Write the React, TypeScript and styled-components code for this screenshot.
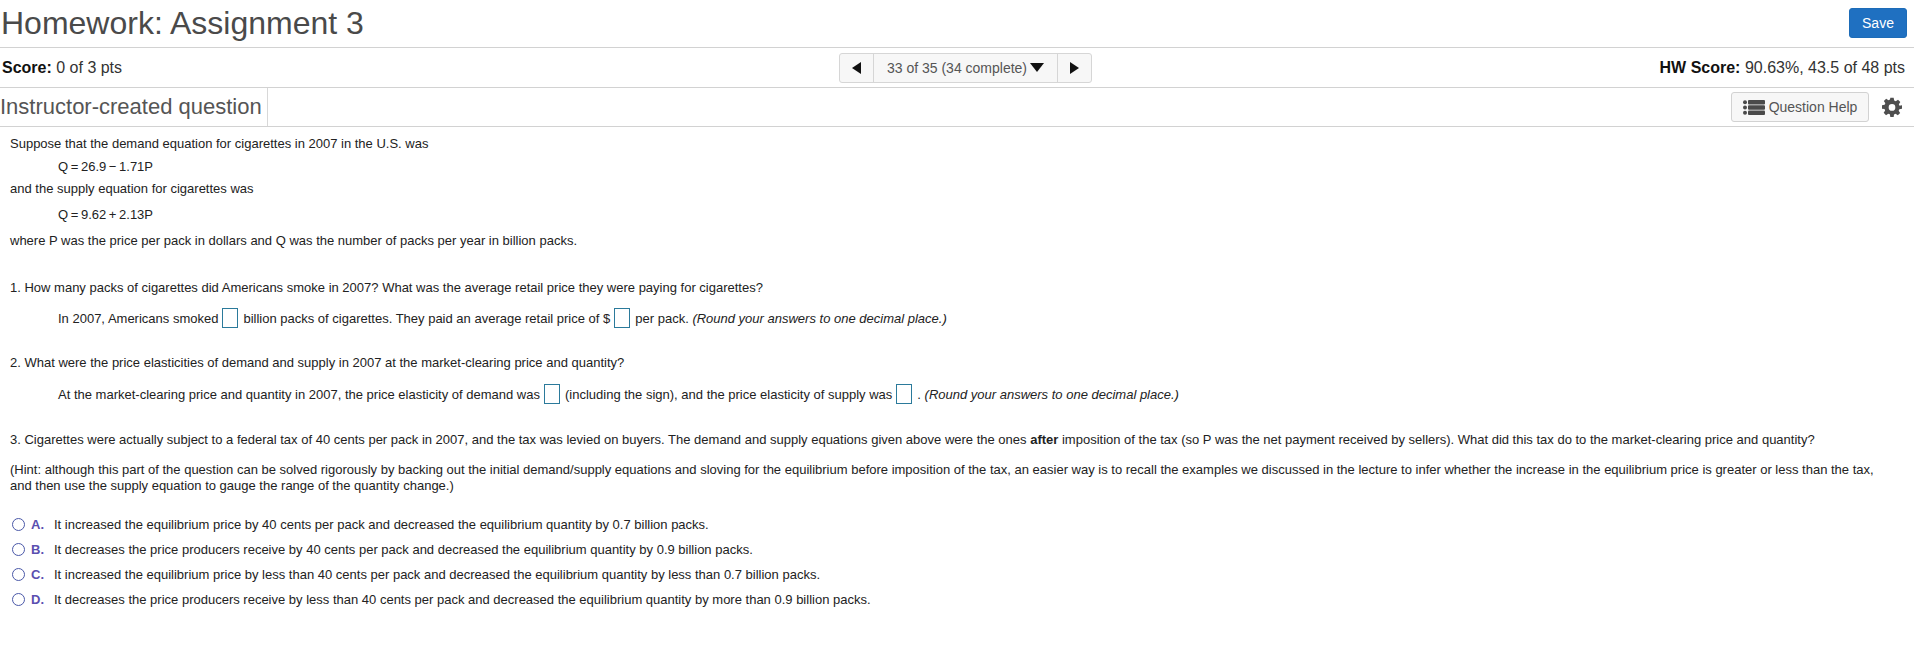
import React from "react";
import styled, {createGlobalStyle} from "styled-components";

const GlobalStyle = createGlobalStyle`
  html, body {
    margin: 0;
    padding: 0;
    background: #fff;
    font-family: "Liberation Sans", Arial, sans-serif;
  }
`

const Page = styled.div`
  width: 1914px;
  height: 647px;
  overflow: hidden;
`
const TitleBar = styled.div`
  height: 48px;
  box-sizing: border-box;
  display: flex;
  align-items: center;
  justify-content: space-between;
  padding: 0 7px 1px 1px;
  border-bottom: 1px solid #d2d2d2;
`
const Title = styled.h1`
  margin: 0;
  font-size: 32px;
  font-weight: 400;
  color: #4a4a4a;
`
const SaveButton = styled.button`
  width: 58px;
  height: 30px;
  padding: 0;
  border: 1px solid #1d6cb8;
  border-radius: 3px;
  background: #1f70c1;
  color: #fff;
  font: 14px "Liberation Sans", Arial, sans-serif;
`
const ScoreBar = styled.div`
  height: 39px;
  display: grid;
  grid-template-columns: 837px auto 1fr;
  align-items: center;
  padding: 0 9px 0 2px;
  border-bottom: 1px solid #d2d2d2;
  font-size: 16px;
  color: #333;
`
const ScoreText = styled.div<{$right?: boolean}>`
  text-align: ${p => (p.$right ? "right" : "left")};

  b {
    color: #111;
  }
`
const Pager = styled.div`
  display: flex;
  height: 30px;
  border: 1px solid #d6d6d6;
  border-radius: 3px;
  background: #f7f7f7;
  box-sizing: border-box;
`
const PagerArrow = styled.div`
  width: 33px;
  display: flex;
  align-items: center;
  justify-content: center;
`
const PagerLabel = styled.div`
  width: 183px;
  display: flex;
  align-items: center;
  justify-content: center;
  gap: 3px;
  border-left: 1px solid #d6d6d6;
  border-right: 1px solid #d6d6d6;
  font-size: 14px;
  color: #555;
`
const QuestionBar = styled.div`
  height: 38px;
  display: flex;
  align-items: stretch;
  justify-content: space-between;
  padding-right: 12px;
  border-bottom: 1px solid #d2d2d2;
`
const QuestionTitle = styled.div`
  display: flex;
  align-items: center;
  padding-right: 5px;
  border-right: 1px solid #d8d8d8;
  font-size: 22px;
  color: #555;
`
const QuestionTools = styled.div`
  display: flex;
  align-items: center;
  gap: 13px;
`
const HelpButton = styled.button`
  width: 138px;
  height: 30px;
  display: flex;
  align-items: center;
  justify-content: center;
  gap: 4px;
  padding: 0;
  border: 1px solid #d2d2d2;
  border-radius: 3px;
  background: #f7f7f7;
  color: #555;
  font: 14px "Liberation Sans", Arial, sans-serif;
`
const Body = styled.div`
  padding: 0 20px 0 10px;
  font-size: 13px;
  color: #222;
`
const Line = styled.div<{$top: number; $indent?: number}>`
  margin-top: ${p => p.$top}px;
  margin-left: ${p => p.$indent || 0}px;
  line-height: 15px;
  display: flex;
  align-items: center;
  white-space: pre;
`
const Equation = styled(Line)`
  word-spacing: -1px;
`
const Answer = styled.span`
  width: 16px;
  height: 20px;
  margin: 0 5px 0 4px;
  border: 1px solid #2b7a9b;
  box-sizing: border-box;
  display: inline-block;
`
const Hint = styled.div`
  margin-top: 15px;
  line-height: 16px;
`
const Choices = styled.div`
  margin-top: 23px;
  display: flex;
  flex-direction: column;
  gap: 10px;
`
const Choice = styled.div`
  display: flex;
  align-items: center;
  line-height: 15px;
  margin-left: 2px;
`
const Radio = styled.span`
  width: 13px;
  height: 13px;
  border: 1px solid #4a58a8;
  border-radius: 50%;
  box-sizing: border-box;
  margin-right: 6px;
  flex: none;
`
const ChoiceLetter = styled.b`
  width: 23px;
  color: #5a4fb0;
  font-size: 13px;
`

const choices = [
    ["A.", "It increased the equilibrium price by 40 cents per pack and decreased the equilibrium quantity by 0.7 billion packs."],
    ["B.", "It decreases the price producers receive by 40 cents per pack and decreased the equilibrium quantity by 0.9 billion packs."],
    ["C.", "It increased the equilibrium price by less than 40 cents per pack and decreased the equilibrium quantity by less than 0.7 billion packs."],
    ["D.", "It decreases the price producers receive by less than 40 cents per pack and decreased the equilibrium quantity by more than 0.9 billion packs."],
]

const Triangle: React.FC<{dir: "left" | "right" | "down"}> = ({dir}) => {
    const points = {left: "9,0 9,12 0,6", right: "0,0 0,12 9,6", down: "0,0 14,0 7,9"}[dir]
    const [w, h] = dir === "down" ? [14, 9] : [9, 12]
    return <svg width={w} height={h} viewBox={`0 0 ${w} ${h}`}><polygon points={points} fill="#111"/></svg>
}

const ListIcon = () => (
    <svg width="22" height="15" viewBox="0 0 22 15" fill="#4a4a4a">
        <circle cx="2" cy="2.2" r="2"/>
        <circle cx="2" cy="7.5" r="2"/>
        <circle cx="2" cy="12.8" r="2"/>
        <rect x="5" y="0" width="17" height="4.4" rx="1"/>
        <rect x="5" y="5.3" width="17" height="4.4" rx="1"/>
        <rect x="5" y="10.6" width="17" height="4.4" rx="1"/>
    </svg>
)

const GearIcon = () => (
    <svg width="20" height="20" viewBox="0 0 24 24" fill="#4f4f4f">
        <path fillRule="evenodd" d="M10 1h4l.6 3.2 1.9.8 2.7-1.8 2.8 2.8-1.8 2.7.8 1.9L24 10v4l-3.2.6-.8 1.9 1.8 2.7-2.8 2.8-2.7-1.8-1.9.8L14 24h-4l-.6-3.2-1.9-.8-2.7 1.8L2 19l1.8-2.7-.8-1.9L0 14v-4l3.2-.6.8-1.9L2.2 4.8 5 2l2.7 1.8 1.9-.8L10 1zm2 7.5a4 4 0 1 0 0 8 4 4 0 0 0 0-8z"/>
    </svg>
)

export default function App() {
    return (
        <Page>
            <GlobalStyle/>
            <TitleBar>
                <Title>Homework: Assignment 3</Title>
                <SaveButton>Save</SaveButton>
            </TitleBar>
            <ScoreBar>
                <ScoreText><b>Score:</b> 0 of 3 pts</ScoreText>
                <Pager>
                    <PagerArrow><Triangle dir="left"/></PagerArrow>
                    <PagerLabel>33 of 35 (34 complete) <Triangle dir="down"/></PagerLabel>
                    <PagerArrow><Triangle dir="right"/></PagerArrow>
                </Pager>
                <ScoreText $right><b>HW Score:</b> 90.63%, 43.5 of 48 pts</ScoreText>
            </ScoreBar>
            <QuestionBar>
                <QuestionTitle>Instructor-created question</QuestionTitle>
                <QuestionTools>
                    <HelpButton><ListIcon/> Question Help</HelpButton>
                    <GearIcon/>
                </QuestionTools>
            </QuestionBar>
            <Body>
                <Line $top={9}>Suppose that the demand equation for cigarettes in 2007 in the U.S. was</Line>
                <Equation $top={8} $indent={48}>Q = 26.9 − 1.71P</Equation>
                <Line $top={7}>and the supply equation for cigarettes was</Line>
                <Equation $top={11} $indent={48}>Q = 9.62 + 2.13P</Equation>
                <Line $top={11}>where P was the price per pack in dollars and Q was the number of packs per year in billion packs.</Line>
                <Line $top={32}>1. How many packs of cigarettes did Americans smoke in 2007? What was the average retail price they were paying for cigarettes?</Line>
                <Line $top={13} $indent={48}>In 2007, Americans smoked<Answer/>billion packs of cigarettes. They paid an average retail price of $<Answer/>per pack. <i>(Round your answers to one decimal place.)</i></Line>
                <Line $top={27}>2. What were the price elasticities of demand and supply in 2007 at the market-clearing price and quantity?</Line>
                <Line $top={14} $indent={48}>At the market-clearing price and quantity in 2007, the price elasticity of demand was<Answer/>(including the sign), and the price elasticity of supply was<Answer/>. <i>(Round your answers to one decimal place.)</i></Line>
                <Line $top={28}><span>3. Cigarettes were actually subject to a federal tax of 40 cents per pack in 2007, and the tax was levied on buyers. The demand and supply equations given above were the ones <b>after</b> imposition of the tax (so P was the net payment received by sellers). What did this tax do to the market-clearing price and quantity?</span></Line>
                <Hint>(Hint: although this part of the question can be solved rigorously by backing out the initial demand/supply equations and sloving for the equilibrium before imposition of the tax, an easier way is to recall the examples we discussed in the lecture to infer whether the increase in the equilibrium price is greater or less than the tax, and then use the supply equation to gauge the range of the quantity change.)</Hint>
                <Choices>
                    {choices.map(([letter, text]) => (
                        <Choice key={letter}>
                            <Radio/>
                            <ChoiceLetter>{letter}</ChoiceLetter>
                            {text}
                        </Choice>
                    ))}
                </Choices>
            </Body>
        </Page>
    )
}
